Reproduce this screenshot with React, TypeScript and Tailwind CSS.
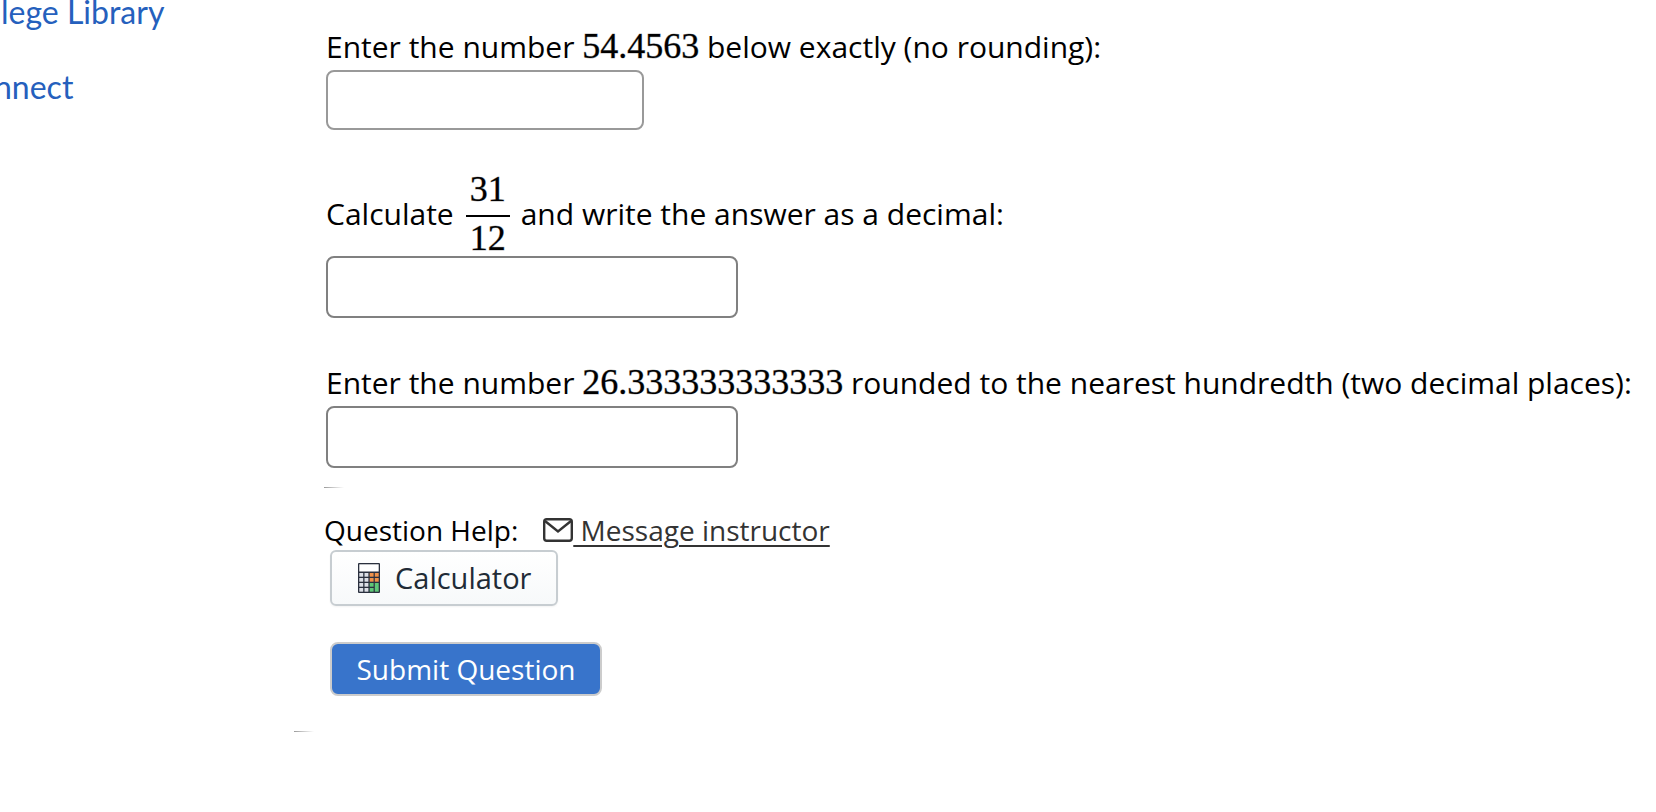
import React from "react";

type MathTextProps = { children: React.ReactNode };

const MathText: React.FC<MathTextProps> = ({ children }) => (
  <span className="font-['Liberation_Serif',serif] text-4xl leading-9 [-webkit-text-stroke:1px_rgb(0_0_0/0.35)]">{children}</span>
);

const Fraction: React.FC<{ top: string; bottom: string }> = ({ top, bottom }) => (
  <span className="inline-flex w-11 flex-col items-center">
    <MathText>{top}</MathText>
    <span className="mt-2 mb-[3px] h-[2px] w-full bg-black" />
    <MathText>{bottom}</MathText>
  </span>
);

const FadingRule: React.FC = () => <hr className="h-px w-5 border-0 bg-linear-to-r from-[#9a9a9a] to-transparent" />;

const CalculatorIcon: React.FC = () => (
  <svg width="22" height="30" viewBox="0 0 22 30" aria-hidden="true">
    <rect width="22" height="30" rx="1" fill="#2a303e" />
    <rect x="1.3" y="1.3" width="19.4" height="7.2" fill="#fff" />
    {[10, 15, 20, 25].map((y) => (
      <g key={y}>
        <rect x="1.3" y={y} width="3.9" height="3.7" fill="#dcdfe6" />
        <rect x="6.5" y={y} width="3.9" height="3.7" fill="#dcdfe6" />
        <rect x="11.7" y={y} width="3.9" height="3.7" fill={y < 20 ? "#f0924a" : "#5fc878"} />
      </g>
    ))}
    <rect x="16.8" y="10" width="3.9" height="3.7" fill="#f0924a" />
    <rect x="16.8" y="15" width="3.9" height="3.7" fill="#f0924a" />
    <rect x="16.8" y="20" width="3.9" height="8.7" fill="#5fc878" />
  </svg>
);

const MailIcon: React.FC = () => (
  <svg width="30" height="24" viewBox="0 0 30 24" fill="none" stroke="#333" strokeWidth="2.4" aria-hidden="true">
    <rect x="1.2" y="1.2" width="27.6" height="21.6" rx="2.5" />
    <path d="M2 3l13 10.5L28 3" />
  </svg>
);

const App: React.FC = () => {
  return (
    <div className="flex items-start overflow-hidden bg-white font-['Open_Sans',sans-serif] text-black">
      <nav className="flex w-[294px] shrink-0 flex-col gap-[35px] font-['Lato',sans-serif] text-[32px] leading-10 text-[#2560bd]">
        <a href="#library" className="-mt-2 pl-px">
          lege Library
        </a>
        <a href="#connect" className="-ml-[6px]">
          nnect
        </a>
      </nav>

      <main className="min-w-0 flex-1 pt-[27px]">
        <form id="question" className="pl-8 text-[30px] leading-10" onSubmit={(e) => e.preventDefault()}>
          <label htmlFor="exact" className="block h-10 whitespace-nowrap">
            Enter the number <MathText>54.4563</MathText> below exactly (no rounding):
          </label>
          <input id="exact" type="text" className="mt-[3px] block h-15 w-[318px] rounded-lg border-2 border-[#999] px-3" />

          <label htmlFor="decimal" className="mt-[41px] flex items-center whitespace-nowrap">
            <span className="mr-3">Calculate</span>
            <Fraction top="31" bottom="12" />
            <span className="ml-[11px]">and write the answer as a decimal:</span>
          </label>
          <input id="decimal" type="text" className="block h-[62px] w-[412px] rounded-lg border-2 border-[#808080] px-3" />

          <label htmlFor="rounded" className="mt-[45px] block h-10 whitespace-nowrap">
            Enter the number <MathText>26.333333333333</MathText> rounded to the nearest hundredth (two decimal places):
          </label>
          <input id="rounded" type="text" className="mt-[3px] block h-[62px] w-[412px] rounded-lg border-2 border-[#808080] px-3" />
        </form>

        <div className="mt-[19px] pl-[30px] text-[28px] leading-10">
          <FadingRule />
          <div className="mt-[22px] flex items-center">
            <span>Question Help:</span>
            <a href="#message" className="ml-[25px] flex items-center whitespace-pre text-[#333] underline decoration-2 underline-offset-4">
              <MailIcon />
              <span> Message instructor</span>
            </a>
          </div>
          <button
            type="button"
            className="ml-[6px] flex h-14 w-[228px] items-center gap-[15px] rounded-md border-2 border-[#c7cdd1] bg-linear-to-b from-white to-[#f7f9fa] pl-[26px] text-[29px] text-[#212b36] shadow-xs"
          >
            <CalculatorIcon />
            Calculator
          </button>
          <button
            type="submit"
            form="question"
            className="mt-9 ml-[6px] flex h-[54px] w-[272px] items-center justify-center rounded-lg border-2 border-[#ccc] bg-[#3874cb] text-white"
          >
            Submit Question
          </button>
        </div>

        <div className="pt-[35px]">
          <FadingRule />
        </div>
      </main>
    </div>
  );
};

export default App;
